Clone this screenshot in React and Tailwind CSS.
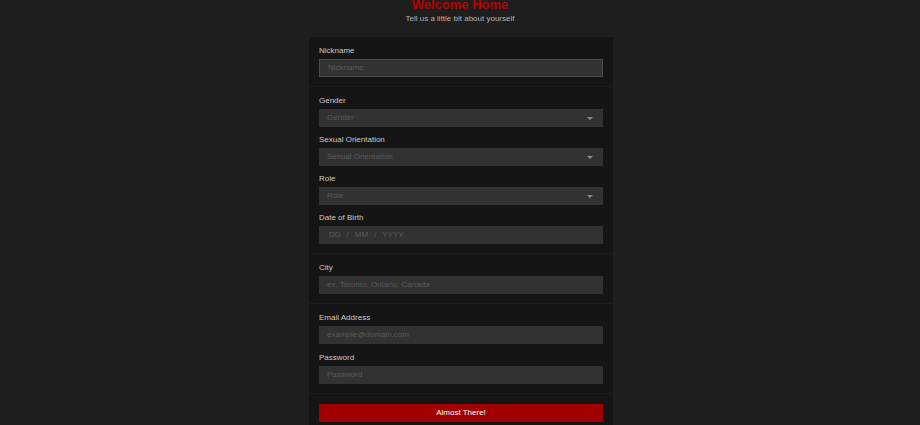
function Field({ label, children }) {
    return (
        <div className="flex flex-col">
            <label className="text-[8px] leading-[10px] text-[#c8c8c8]">{label}</label>
            <div className="mt-[3px]">{children}</div>
        </div>
    )
}

function TextBox({ placeholder, bordered }) {
    return (
        <div className={`h-[18px] flex items-center px-[8px] bg-[#323232] text-[8px] text-[#5a5a5a] ${bordered ? 'border border-[#4c4c4c]' : ''}`}>
            {placeholder}
        </div>
    )
}

function SelectBox({ placeholder }) {
    return (
        <div className="h-[18px] flex items-center justify-between px-[8px] bg-[#323232] text-[8px] text-[#5a5a5a]">
            <span>{placeholder}</span>
            <span className="w-0 h-0 border-l-[3px] border-r-[3px] border-t-[3px] border-l-transparent border-r-transparent border-t-[#8a8a8a] mr-[2px]" />
        </div>
    )
}

function Section({ children, tight }) {
    return (
        <div className={`px-[10px] py-[9px] flex flex-col border-b border-[#1d1d1d] ${tight ? 'gap-[8px]' : 'gap-[9px]'}`}>
            {children}
        </div>
    )
}

export default function App() {
    return (
        <div className="w-[920px] h-[425px] overflow-hidden bg-[#1e1e1e] font-['Liberation_Sans',Arial,sans-serif] flex flex-col items-center">
            {/* Heading */}
            <h1 className="-mt-[3px] text-[13px] leading-[15px] font-bold text-[#b80000]">Welcome Home</h1>
            <p className="mt-[2px] text-[8px] leading-[10px] text-[#b4b4b4]">Tell us a little bit about yourself</p>

            {/* Card */}
            <div className="mt-[13px] ml-[2px] w-[304px] bg-[#151515]">
                <Section>
                    <Field label="Nickname">
                        <TextBox placeholder="Nickname" bordered />
                    </Field>
                </Section>

                <Section tight>
                    <Field label="Gender">
                        <SelectBox placeholder="Gender" />
                    </Field>
                    <Field label="Sexual Orientation">
                        <SelectBox placeholder="Sexual Orientation" />
                    </Field>
                    <Field label="Role">
                        <SelectBox placeholder="Role" />
                    </Field>
                    <Field label="Date of Birth">
                        <div className="h-[18px] flex items-center px-[10px] bg-[#323232] text-[8px] text-[#5a5a5a]">
                            <span>DD</span>
                            <span className="ml-[6px]">/</span>
                            <span className="ml-[6px]">MM</span>
                            <span className="ml-[6px]">/</span>
                            <span className="ml-[6px]">YYYY</span>
                        </div>
                    </Field>
                </Section>

                <Section>
                    <Field label="City">
                        <TextBox placeholder="ex. Toronto, Ontario, Canada" />
                    </Field>
                </Section>

                <Section>
                    <Field label="Email Address">
                        <TextBox placeholder="example@domain.com" />
                    </Field>
                    <Field label="Password">
                        <TextBox placeholder="Password" />
                    </Field>
                </Section>

                <div className="px-[10px] pt-[10px] pb-[10px]">
                    <button className="w-full h-[18px] bg-[#a00000] text-white text-[8px] flex items-center justify-center">
                        Almost There!
                    </button>
                </div>
            </div>
        </div>
    )
}
